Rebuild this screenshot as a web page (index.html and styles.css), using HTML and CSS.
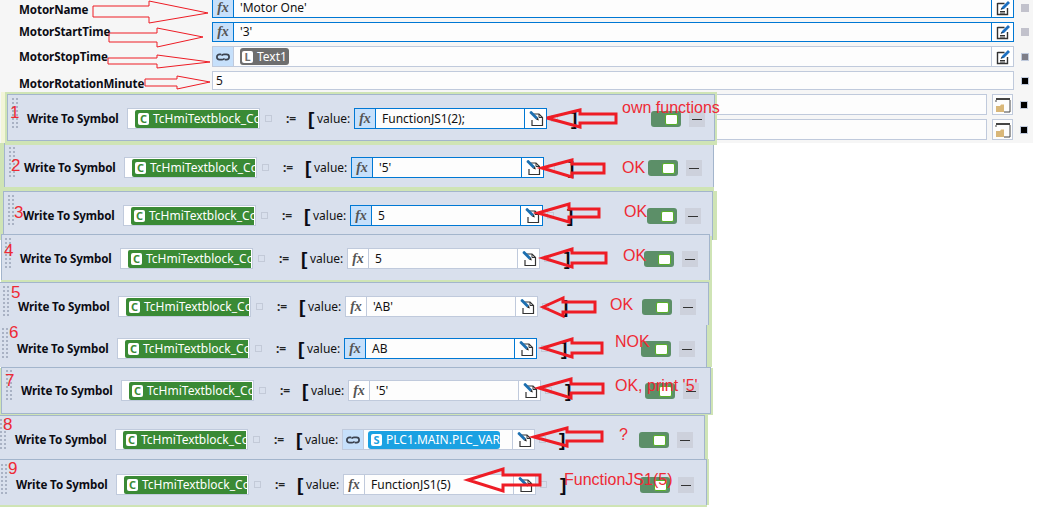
FILE: index.html
```html
<!DOCTYPE html>
<html lang="en">
<head>
<meta charset="utf-8">
<title>Write To Symbol</title>
<link rel="stylesheet" href="styles.css">
</head>
<body>
<svg class="defs" width="0" height="0" aria-hidden="true">
  <symbol id="i-edit" viewBox="0 0 16 16">
    <path d="M2.5 3.5h7M2.5 3v11.5h10V8" fill="none" stroke="#333" stroke-width="1.4"/>
    <path d="M5 11.5h5M5 13h5" stroke="#333" stroke-width="1"/>
    <path d="M6 9.5l1-2.5 6-6 2 2-6 6z" fill="#1c6fc0"/>
    <path d="M5.5 10l1.3-2.2 1 1z" fill="#222"/>
  </symbol>
  <symbol id="i-pick" viewBox="0 0 16 16">
    <path d="M5 3h6l3.5 3.5v8H4V9" fill="none" stroke="#333" stroke-width="1.2"/>
    <path d="M11 3v3.5h3.5" fill="none" stroke="#333" stroke-width="1"/>
    <path d="M2 .5l1.5-.5L10 6.5 8 8.500 1.500 2z" fill="#1c6fb0"/>
    <path d="M8 8.500l2-2 .8 3z" fill="#222"/>
  </symbol>
  <symbol id="i-folder" viewBox="0 0 16 16">
    <path d="M1 1h14v2H1z" fill="#444"/>
    <path d="M1 3v2M15 3v12H9" fill="none" stroke="#444" stroke-width="1"/>
    <path d="M1 9h4l1-1.500h3V15H1z" fill="#d9b779"/>
  </symbol>
  <symbol id="i-link" viewBox="0 0 16 16">
    <path d="M6 5H4a3 3 0 0 0 0 6h3a3 3 0 0 0 2.600-1.500M10 11h2a3 3 0 0 0 0-6H9a3 3 0 0 0-2.600 1.500" fill="none" stroke="#3c4350" stroke-width="1.900"/>
  </symbol>
</svg>

<div class="form">
  <div class="row row-a">
    <div class="row-label">MotorName</div>
    <div class="field focus"><span class="mode on"><i class="fx">fx</i></span><span class="val">'Motor One'</span><span class="end"><svg class="ico"><use href="#i-edit"/></svg></span></div>
    <span class="dot dot-light"></span>
  </div>
  <div class="row row-b">
    <div class="row-label">MotorStartTime</div>
    <div class="field focus"><span class="mode on"><i class="fx">fx</i></span><span class="val">'3'</span><span class="end"><svg class="ico"><use href="#i-edit"/></svg></span></div>
    <span class="dot dot-light"></span>
  </div>
  <div class="row row-c">
    <div class="row-label">MotorStopTime</div>
    <div class="field"><span class="mode on"><svg class="ico-link"><use href="#i-link"/></svg></span><span class="val"><span class="tag tag-l"><b class="tag-ic">L</b>Text1</span></span><span class="end"><svg class="ico"><use href="#i-edit"/></svg></span></div>
    <span class="dot dot-mid"></span>
  </div>
  <div class="row row-d">
    <div class="row-label">MotorRotationMinute</div>
    <div class="field"><span class="val val-plain">5</span></div>
    <span class="dot"></span>
  </div>
  <div class="row row-c">
    <div class="row-label"></div>
    <div class="field field-short"></div>
    <span class="pick"><svg class="ico"><use href="#i-folder"/></svg></span>
    <span class="dot"></span>
  </div>
  <div class="row row-c">
    <div class="row-label"></div>
    <div class="field field-short"></div>
    <span class="pick"><svg class="ico"><use href="#i-folder"/></svg></span>
    <span class="dot"></span>
  </div>
</div>

<section class="panel p1">
  <span class="grip"></span><span class="title">Write To Symbol</span>
  <span class="chip"><span class="tag tag-c"><b class="tag-ic">C</b>TcHmiTextblock_Co</span></span>
  <span class="sq"></span><span class="assign">:=</span><b class="br">[</b><span class="key">value:</span>
  <div class="field focus expr"><span class="mode on"><i class="fx">fx</i></span><span class="val">FunctionJS1(2);</span><span class="end"><svg class="ico"><use href="#i-pick"/></svg></span></div>
  <span class="sq sq-2"></span><b class="br br-end">]</b>
  <span class="toggle"><span class="knob"></span></span><span class="minus"></span>
</section>
<section class="panel p2">
  <span class="grip"></span><span class="title">Write To Symbol</span>
  <span class="chip"><span class="tag tag-c"><b class="tag-ic">C</b>TcHmiTextblock_Co</span></span>
  <span class="sq"></span><span class="assign">:=</span><b class="br">[</b><span class="key">value:</span>
  <div class="field focus expr"><span class="mode on"><i class="fx">fx</i></span><span class="val">'5'</span><span class="end"><svg class="ico"><use href="#i-pick"/></svg></span></div>
  <span class="sq sq-2"></span><b class="br br-end">]</b>
  <span class="toggle"><span class="knob"></span></span><span class="minus"></span>
</section>
<section class="panel p3">
  <span class="grip"></span><span class="title">Write To Symbol</span>
  <span class="chip"><span class="tag tag-c"><b class="tag-ic">C</b>TcHmiTextblock_Co</span></span>
  <span class="sq"></span><span class="assign">:=</span><b class="br">[</b><span class="key">value:</span>
  <div class="field focus expr"><span class="mode on"><i class="fx">fx</i></span><span class="val">5</span><span class="end"><svg class="ico"><use href="#i-pick"/></svg></span></div>
  <span class="sq sq-2"></span><b class="br br-end">]</b>
  <span class="toggle"><span class="knob"></span></span><span class="minus"></span>
</section>
<section class="panel p4">
  <span class="grip"></span><span class="title">Write To Symbol</span>
  <span class="chip"><span class="tag tag-c"><b class="tag-ic">C</b>TcHmiTextblock_Co</span></span>
  <span class="sq"></span><span class="assign">:=</span><b class="br">[</b><span class="key">value:</span>
  <div class="field expr"><span class="mode"><i class="fx">fx</i></span><span class="val">5</span><span class="end"><svg class="ico"><use href="#i-pick"/></svg></span></div>
  <span class="sq sq-2"></span><b class="br br-end">]</b>
  <span class="toggle"><span class="knob"></span></span><span class="minus"></span>
</section>
<section class="panel p5">
  <span class="grip"></span><span class="title">Write To Symbol</span>
  <span class="chip"><span class="tag tag-c"><b class="tag-ic">C</b>TcHmiTextblock_Co</span></span>
  <span class="sq"></span><span class="assign">:=</span><b class="br">[</b><span class="key">value:</span>
  <div class="field expr"><span class="mode"><i class="fx">fx</i></span><span class="val">'AB'</span><span class="end"><svg class="ico"><use href="#i-pick"/></svg></span></div>
  <span class="sq sq-2"></span><b class="br br-end">]</b>
  <span class="toggle"><span class="knob"></span></span><span class="minus"></span>
</section>
<section class="panel p6">
  <span class="grip"></span><span class="title">Write To Symbol</span>
  <span class="chip"><span class="tag tag-c"><b class="tag-ic">C</b>TcHmiTextblock_Co</span></span>
  <span class="sq"></span><span class="assign">:=</span><b class="br">[</b><span class="key">value:</span>
  <div class="field focus expr"><span class="mode on"><i class="fx">fx</i></span><span class="val">AB</span><span class="end"><svg class="ico"><use href="#i-pick"/></svg></span></div>
  <span class="sq sq-2"></span><b class="br br-end">]</b>
  <span class="toggle"><span class="knob"></span></span><span class="minus"></span>
</section>
<section class="panel p7">
  <span class="grip"></span><span class="title">Write To Symbol</span>
  <span class="chip"><span class="tag tag-c"><b class="tag-ic">C</b>TcHmiTextblock_Co</span></span>
  <span class="sq"></span><span class="assign">:=</span><b class="br">[</b><span class="key">value:</span>
  <div class="field expr"><span class="mode"><i class="fx">fx</i></span><span class="val">'5'</span><span class="end"><svg class="ico"><use href="#i-pick"/></svg></span></div>
  <span class="sq sq-2"></span><b class="br br-end">]</b>
  <span class="toggle"><span class="knob"></span></span><span class="minus"></span>
</section>
<section class="panel p8">
  <span class="grip"></span><span class="title">Write To Symbol</span>
  <span class="chip"><span class="tag tag-c"><b class="tag-ic">C</b>TcHmiTextblock_Co</span></span>
  <span class="sq"></span><span class="assign">:=</span><b class="br">[</b><span class="key">value:</span>
  <div class="field expr"><span class="mode on"><svg class="ico-link"><use href="#i-link"/></svg></span><span class="val val-tag"><span class="tag tag-s"><b class="tag-ic">S</b>PLC1.MAIN.PLC_VAR</span></span><span class="end"><svg class="ico"><use href="#i-pick"/></svg></span></div>
  <span class="sq sq-2"></span><b class="br br-end">]</b>
  <span class="toggle"><span class="knob"></span></span><span class="minus"></span>
</section>
<section class="panel p9">
  <span class="grip"></span><span class="title">Write To Symbol</span>
  <span class="chip"><span class="tag tag-c"><b class="tag-ic">C</b>TcHmiTextblock_Co</span></span>
  <span class="sq"></span><span class="assign">:=</span><b class="br">[</b><span class="key">value:</span>
  <div class="field expr"><span class="mode"><i class="fx">fx</i></span><span class="val">FunctionJS1(5)</span><span class="end"><svg class="ico"><use href="#i-pick"/></svg></span></div>
  <span class="sq sq-2"></span><b class="br br-end">]</b>
  <span class="toggle"><span class="knob"></span></span><span class="minus"></span>
</section>

<svg class="notes" width="1049" height="507" viewBox="0 0 1049 507">
  <g class="thin">
    <polygon points="93,6 149,6 149,1 208,13 149,23 149,17 93,17"/>
    <polygon points="109,33 157,33 157,28 203,37 157,47 157,42 109,42"/>
    <polygon points="108,58 157,58 157,55 210,62 157,68 157,64 108,64"/>
    <polygon points="145,79 177,79 177,76 210,82 177,89 177,86 145,86"/>
  </g>
  <g class="thick">
    <polygon points="547,118 580,110 580,114 616,114 616,123 580,123 580,127"/>
    <polygon points="542,168 572,160 572,164 604,164 604,173 572,173 572,177"/>
    <polygon points="538,213 569,204 569,209 599,209 599,217 569,217 569,222"/>
    <polygon points="543,258 572,249 572,253 606,253 606,263 572,263 572,267"/>
    <polygon points="543,307 563,298 563,302 595,302 595,312 563,312 563,316"/>
    <polygon points="543,348 572,339 572,343 602,343 602,353 572,353 572,357"/>
    <polygon points="539,388 571,379 571,384 603,384 603,393 571,393 571,398"/>
    <polygon points="534,437 567,428 567,432 602,432 602,441 567,441 567,446"/>
    <polygon points="468,480 503,469 503,475 540,475 540,485 503,485 503,491"/>
  </g>
  <g class="digits">
    <text x="10" y="118">1</text>
    <text x="11" y="171">2</text>
    <text x="14" y="218">3</text>
    <text x="4" y="256">4</text>
    <text x="11" y="298">5</text>
    <text x="9" y="338">6</text>
    <text x="5" y="386">7</text>
    <text x="3" y="430">8</text>
    <text x="8" y="474">9</text>
  </g>
  <g class="words">
    <text x="622" y="113">own functions</text>
    <text x="622" y="173">OK</text>
    <text x="624" y="217">OK</text>
    <text x="623" y="261">OK</text>
    <text x="610" y="310">OK</text>
    <text x="615" y="347">NOK</text>
    <text x="615" y="391">OK, print '5'</text>
    <text x="619" y="440">?</text>
    <text x="564" y="485">FunctionJS1(5)</text>
  </g>
</svg>
</body>
</html>
```
FILE: styles.css
```css
* { box-sizing: border-box; }
html, body { margin: 0; padding: 0; }
body {
  position: relative;
  width: 1049px;
  height: 507px;
  overflow: hidden;
  background: #fff;
  font: 12px/1 "Noto Sans", "Liberation Sans", sans-serif;
  color: #000;
}
.defs { position: absolute; }

/* top property form */
.form {
  width: 1033px;
  height: 143px;
  padding-left: 19px;
  background: #f6f6f6;
  overflow: hidden;
  display: flex;
  flex-direction: column;
  gap: 4px;
}
.row { display: flex; align-items: stretch; flex: none; }
.row-a { height: 20px; margin-top: -2px; }
.row-b { height: 20px; }
.row-c { height: 21px; }
.row-d { height: 19px; }
.row-label {
  width: 193px;
  flex: none;
  display: flex;
  align-items: center;
  font-weight: 700;
  font-size: 11.6px;
  letter-spacing: -.1px;
  color: #0c0c14;
}
.row-a .row-label { padding-top: 4px; }
.row-d .row-label { padding-top: 7px; }

.field {
  flex: none;
  width: 802px;
  display: flex;
  align-items: stretch;
  background: #fdfdfd;
  border: 1px solid #c0cadc;
}
.field.focus { border: 1px solid #0078d4; }
.field-short { width: 775px; }
.mode {
  width: 21px;
  flex: none;
  display: flex;
  align-items: center;
  justify-content: center;
  background: #fff;
  border-right: 1px solid #c0cadc;
}
.mode.on { background: #c6e0fb; }
.focus .mode { border-right-color: #0078d4; }
.fx {
  font: italic 700 14px/1 "Liberation Serif", serif;
  color: #555;
}
.ico-link { width: 14px; height: 14px; }
.val {
  flex: 1;
  min-width: 0;
  display: flex;
  align-items: center;
  padding-left: 6px;
  white-space: nowrap;
  color: #111;
}
.val-plain { padding-left: 3px; }
.val-tag { padding-left: 4px; }
.end {
  width: 22px;
  flex: none;
  display: flex;
  align-items: center;
  justify-content: center;
  background: #fff;
  border-left: 1px solid #c0cadc;
}
.focus .end { border-left-color: #0078d4; }
.ico { width: 16px; height: 16px; }
.pick {
  width: 21px;
  margin-left: 5px;
  flex: none;
  display: flex;
  align-items: center;
  justify-content: center;
  background: #fdfdfd;
  border: 1px solid #c0cadc;
}
.dot {
  width: 8px;
  height: 8px;
  margin: auto 0 auto 8px;
  flex: none;
  background: #000;
  border: 1px solid #c0cadc;
}
.row-c .pick + .dot { margin-left: 7px; }
.row-a .dot, .row-b .dot, .row-c .field + .dot, .row-d .dot { margin-left: 7px; }
.dot-light { background: #c2c2cc; border-color: #c2c2cc; }
.dot-mid { background: #7e7e88; }

/* pasted-in rule panels, each a free-floating slice */
.panel {
  position: absolute;
  display: flex;
  align-items: flex-start;
  background: #d9e0ed;
  border: 0 solid #a3b5cc;
}
.p1 { left: 7px; top: 94px; width: 708px; height: 47px; padding: 13px 0 0 4px; border-width: 1px;
  box-shadow: 0 0 0 2px #cfe4b5, 0 2px 0 2px #cfe4b5, -4px 0 0 2px #f2f5d8; z-index: 2; }
.p2 { left: 4px; top: 143px; width: 710px; height: 44px; padding: 13px 0 0 4px; border-width: 1px 1px 0 1px;
  box-shadow: 0 4px 0 #cfe4b5, -4px 0 0 #cfe4b5, -4px 4px 0 #cfe4b5; z-index: 1; }
.p3 { left: 3px; top: 191px; width: 710px; height: 49px; padding: 13px 0 0 4px; border-width: 1px 1px 0 1px;
  box-shadow: 4px 0 0 #cfe4b5, -3px 0 0 #cfe4b5; z-index: 1; }
.p4 { left: 1px; top: 234px; width: 709px; height: 46px; padding: 13px 0 0 3px; border-width: 1px 1px 0 1px;
  box-shadow: 0 2px 0 #cfe4b5, 2px 2px 0 #cfe4b5; z-index: 3; }
.p5 { left: 0; top: 282px; width: 709px; height: 43px; padding: 13px 0 0 3px; border-width: 1px 1px 0 0;
  box-shadow: 3px 0 0 #cfe4b5; z-index: 3; }
.p6 { left: 0; top: 325px; width: 707px; height: 42px; padding: 13px 0 0 2px; border-width: 0 1px 0 0;
  box-shadow: 5px 0 0 #cfe4b5; z-index: 3; }
.p7 { left: 1px; top: 367px; width: 710px; height: 47px; padding: 12px 0 0 4px; border-width: 1px;
  box-shadow: 2px 1px 0 #cfe4b5, -1px 1px 0 #cfe4b5; z-index: 4; }
.p8 { left: 0; top: 415px; width: 705px; height: 44px; padding: 13px 0 0 0; border-width: 1px 1px 0 0;
  box-shadow: 3px 0 0 #cfe4b5; z-index: 4; }
.p9 { left: 0; top: 459px; width: 707px; height: 46px; padding: 14px 0 0 1px; border-width: 1px 1px 0 0;
  box-shadow: 2px 0 0 #cfe4b5, 0 2px 0 #cfe4b5; z-index: 5; }

.grip {
  width: 6px;
  height: 32px;
  margin: -10px 9px 0 0;
  flex: none;
  background-image: radial-gradient(circle at 1px 1px, #a9b2c4 1px, transparent 1px);
  background-size: 4px 4px;
}
.title {
  width: 100px;
  height: 21px;
  flex: none;
  display: flex;
  align-items: center;
  font-weight: 700;
  font-size: 11.6px;
  letter-spacing: -.1px;
  color: #0c0c14;
  white-space: nowrap;
}
.chip {
  width: 133px;
  height: 21px;
  flex: none;
  display: flex;
  align-items: center;
  justify-content: flex-end;
  padding-right: 1px;
  background: #fff;
  border: 1px solid #c0cadc;
  overflow: hidden;
}
.tag {
  display: inline-flex;
  align-items: center;
  color: #fff;
  white-space: nowrap;
  overflow: hidden;
  border-radius: 3px;
}
.tag-c { width: 123px; height: 18px; background: #3a8a35; border-radius: 2px 0 0 2px; padding-left: 3px; font-size: 12px; }
.tag-l { height: 17px; background: #6e6e6e; padding: 0 2px 0 2px; }
.tag-s { height: 18px; width: 132px; background: #1ba1e2; padding-left: 3px; font-size: 12px; }
.tag-ic {
  width: 11px;
  height: 12px;
  margin-right: 4px;
  flex: none;
  display: flex;
  align-items: center;
  justify-content: center;
  background: #fff;
  border-radius: 2px;
  font-size: 11px;
  font-weight: 700;
}
.tag-c .tag-ic { color: #3a8a35; }
.tag-l .tag-ic { color: #6e6e6e; }
.tag-s .tag-ic { color: #1ba1e2; }
.sq {
  width: 7px;
  height: 7px;
  margin: 7px 0 0 5px;
  flex: none;
  border: 1px solid #c3cad8;
}
.assign {
  width: 22px;
  height: 21px;
  margin-left: 14px;
  flex: none;
  display: flex;
  align-items: center;
  font-weight: 700;
  font-size: 12px;
  color: #222;
}
.br {
  height: 21px;
  width: 9px;
  flex: none;
  display: flex;
  align-items: center;
  font: 700 19px/1 "Liberation Sans", sans-serif;
  color: #0a0a14;
}
.key {
  width: 37px;
  height: 21px;
  flex: none;
  display: flex;
  align-items: center;
  font-size: 12px;
  color: #111;
}
.expr { width: 193px; height: 21px; }
.sq-2 { margin: 7px 0 0 4px; }
.br-end { margin-left: 13px; }
.toggle {
  width: 30px;
  height: 16px;
  margin: 3px 0 0 71px;
  flex: none;
  display: flex;
  align-items: center;
  justify-content: flex-end;
  padding-right: 3px;
  background: #5c8f68;
  border-radius: 3px;
}
.knob {
  width: 13px;
  height: 11px;
  background: #fff;
  border: 1px solid #58b028;
  border-radius: 2px;
}
.minus {
  width: 16px;
  height: 16px;
  margin: 3px 0 0 8px;
  flex: none;
  display: flex;
  align-items: center;
  justify-content: center;
  background: #cdd1dc;
}
.minus::before { content: ""; width: 10px; height: 1px; background: #333; }

/* red markup drawn over the screenshot */
.notes { position: absolute; left: 0; top: 0; z-index: 10; pointer-events: none; }
.thin polygon { fill: none; stroke: #ee1c25; stroke-width: 1; }
.thick polygon { fill: none; stroke: #ee1c25; stroke-width: 3; }
.digits text { font: 17px "Liberation Sans", sans-serif; fill: #ee2a35; }
.words text { font: 16px "Liberation Sans", sans-serif; fill: #ee2a35; }
```
